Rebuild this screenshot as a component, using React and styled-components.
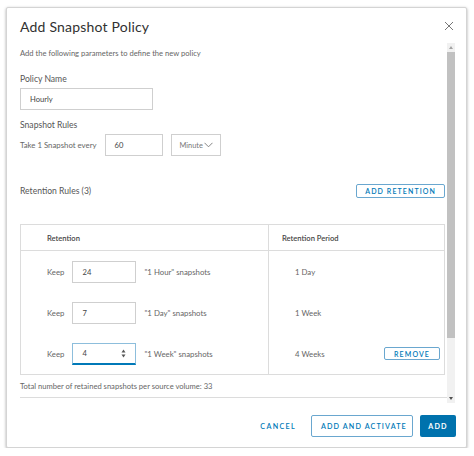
import React from 'react'
import styled, { createGlobalStyle } from 'styled-components'

const GlobalStyle = createGlobalStyle`
  html, body { margin: 0; padding: 0; background: #fff; }
  body { font-family: Lato, "Liberation Sans", sans-serif; color: #565656; }
`

const rules = [
  { keep: '24', unit: '"1 Hour" snapshots', period: '1 Day' },
  { keep: '7', unit: '"1 Day" snapshots', period: '1 Week' },
  { keep: '4', unit: '"1 Week" snapshots', period: '4 Weeks', focused: true, removable: true },
]

const Dialog = styled.div`
  margin: 7px 0 0 6px;
  width: 461px;
  height: 441px;
  box-sizing: border-box;
  border: 1px solid #d4d4d4;
  border-radius: 2px;
  background: #fff;
  box-shadow: 0 1px 3px rgba(0, 0, 0, 0.35);
  display: flex;
  flex-direction: column;
`

const Header = styled.div`
  height: 35px;
  display: flex;
  align-items: center;
  justify-content: space-between;
  padding: 0 12px 0 13px;
`

const Title = styled.h1`
  margin: 2px 0 0;
  font-size: 14px;
  font-weight: 400;
  color: #313131;
  letter-spacing: 0.2px;
`

const Close = styled.button`
  border: 0;
  background: none;
  padding: 0;
  width: 10px;
  height: 10px;
  display: flex;
`

const BodyRow = styled.div`
  display: flex;
  height: 360px;
`

const Content = styled.div`
  flex: 1;
  padding: 3px 0 0 13px;
  display: flex;
  flex-direction: column;
`

const Scrollbar = styled.div`
  width: 8px;
  margin-right: 11px;
  margin-left: 1px;
  display: flex;
  flex-direction: column;
  background: #f1f1f1;
`

const ScrollArrow = styled.div`
  height: 9px;
  display: flex;
  align-items: center;
  justify-content: center;
  background: #f1f1f1;
`

const Thumb = styled.div`
  height: 286px;
  background: #c1c1c1;
`

const Track = styled.div`
  flex: 1;
`

const Hint = styled.p`
  margin: 0;
  font-size: 7.6px;
  line-height: 14px;
  color: #666;
`

const Label = styled.div`
  font-size: 8.6px;
  line-height: 14px;
  color: #565656;
  margin-top: ${p => p.$top || 0}px;
`

const TextInput = styled.div`
  box-sizing: border-box;
  width: ${p => p.$w}px;
  height: 22px;
  border: 1px solid ${p => (p.$focused ? '#8dbedc' : '#cfcfcf')};
  border-bottom: ${p => (p.$focused ? '2px solid #0079b8' : '1px solid #cfcfcf')};
  padding: 0 9px;
  display: flex;
  align-items: center;
  justify-content: space-between;
  font-size: 7.6px;
  color: #454545;
  background: #fff;
  white-space: nowrap;
`

const Field = styled(TextInput)`
  margin-top: ${p => p.$top || 0}px;
`

const RuleRow = styled.div`
  display: flex;
  align-items: center;
  margin-top: 2px;
  gap: 8px;
`

const Small = styled.span`
  font-size: 7.8px;
  color: #666;
  white-space: nowrap;
`

const Select = styled(TextInput)`
  color: #777;
  font-size: 7.4px;
  padding: 0 7px 0 8px;
`

const SectionBar = styled.div`
  display: flex;
  align-items: center;
  justify-content: space-between;
  margin-top: 26px;
  height: 17px;
`

const OutlineButton = styled.button`
  box-sizing: border-box;
  height: ${p => p.$h || 14}px;
  width: ${p => (p.$w ? `${p.$w}px` : 'auto')};
  padding: 0 ${p => p.$px || 9}px;
  border: 1px solid #6aa7cf;
  border-radius: 2px;
  background: #fff;
  color: #0079b8;
  font-family: inherit;
  font-size: ${p => p.$fs || 7}px;
  font-weight: 600;
  letter-spacing: ${p => p.$ls || 1.1}px;
  text-transform: uppercase;
  white-space: nowrap;
  margin-right: ${p => p.$mr || 0}px;
`

const Table = styled.div`
  margin-top: 25px;
  margin-right: 1px;
  border: 1px solid #dcdcdc;
  display: grid;
  grid-template-columns: 248px 1fr;
`

const HeadCell = styled.div`
  height: 25px;
  border-bottom: 1px solid #dcdcdc;
  border-right: ${p => (p.$first ? '1px solid #dcdcdc' : '0')};
  display: flex;
  align-items: center;
  padding-left: ${p => p.$pl}px;
  font-size: 7.6px;
  font-weight: 600;
  color: #454545;
`

const Column = styled.div`
  display: flex;
  flex-direction: column;
  border-right: ${p => (p.$first ? '1px solid #dcdcdc' : '0')};
`

const Cell = styled.div`
  height: 41px;
  display: flex;
  align-items: center;
  padding-left: ${p => p.$pl}px;
  padding-right: 4px;
  justify-content: ${p => (p.$spread ? 'space-between' : 'flex-start')};
  gap: 8px;
`

const Total = styled.div`
  font-size: 7.6px;
  color: #666;
  margin-top: 4px;
  line-height: 14px;
`

const Divider = styled.div`
  height: 1px;
  background: #dcdcdc;
  margin-top: 4px;
  margin-right: -1px;
`

const Footer = styled.div`
  flex: 1;
  display: flex;
  justify-content: flex-end;
  align-items: flex-start;
  padding: 12px 10px 0 0;
  gap: 7px;
`

const FlatButton = styled.button`
  height: 22px;
  border: 0;
  background: none;
  color: #0079b8;
  font-family: inherit;
  font-size: 7.2px;
  font-weight: 600;
  letter-spacing: 1.3px;
  padding: 0;
  margin-right: 8px;
`

const PrimaryButton = styled.button`
  height: 22px;
  width: 36px;
  border: 0;
  border-radius: 2px;
  background: #0072ad;
  color: #fff;
  font-family: inherit;
  font-size: 7.2px;
  font-weight: 700;
  letter-spacing: 1.2px;
  padding: 0;
`

const Chevron = () => (
  <svg width="9" height="6" viewBox="0 0 9 6">
    <path d="M0.5 0.8 L4.5 4.8 L8.5 0.8" fill="none" stroke="#777" strokeWidth="0.9" />
  </svg>
)

const Spinner = () => (
  <svg width="5" height="9" viewBox="0 0 5 9">
    <path d="M2.5 0.5 L4.5 3.5 L0.5 3.5 Z" fill="#555" />
    <path d="M2.5 8.5 L4.5 5.5 L0.5 5.5 Z" fill="#555" />
  </svg>
)

const App = () => {
  return (
    <>
      <GlobalStyle />
      <Dialog>
        <Header>
          <Title>Add Snapshot Policy</Title>
          <Close aria-label="Close">
            <svg width="10" height="10" viewBox="0 0 10 10">
              <path d="M1 1 L9 9 M9 1 L1 9" stroke="#777" strokeWidth="1" />
            </svg>
          </Close>
        </Header>
        <BodyRow>
          <Content>
            <Hint>Add the following parameters to define the new policy</Hint>
            <Label $top={12}>Policy Name</Label>
            <Field $w={133} $top={2}>Hourly</Field>
            <Label $top={8}>Snapshot Rules</Label>
            <RuleRow>
              <Small>Take 1 Snapshot every</Small>
              <TextInput $w={58}>60</TextInput>
              <Select $w={50}>
                Minute <Chevron />
              </Select>
            </RuleRow>
            <SectionBar>
              <Label>Retention Rules (3)</Label>
              <OutlineButton $h={14} $px={8} $mr={1}>Add Retention</OutlineButton>
            </SectionBar>
            <Table>
              <HeadCell $first $pl={26}>Retention</HeadCell>
              <HeadCell $pl={13}>Retention Period</HeadCell>
              <Column $first>
                {rules.map(r => (
                  <Cell key={r.unit} $pl={26}>
                    <Small>Keep</Small>
                    <TextInput $w={64} $focused={r.focused}>
                      {r.keep}
                      {r.focused && <Spinner />}
                    </TextInput>
                    <Small>{r.unit}</Small>
                  </Cell>
                ))}
              </Column>
              <Column>
                {rules.map(r => (
                  <Cell key={r.period} $pl={26} $spread>
                    <Small>{r.period}</Small>
                    {r.removable && <OutlineButton $h={13} $px={9} $fs={7}>Remove</OutlineButton>}
                  </Cell>
                ))}
              </Column>
            </Table>
            <Total>Total number of retained snapshots per source volume: 33</Total>
            <Divider />
          </Content>
          <Scrollbar>
            <ScrollArrow>
              <svg width="4" height="3" viewBox="0 0 4 3"><path d="M2 0 L4 3 L0 3 Z" fill="#a3a3a3" /></svg>
            </ScrollArrow>
            <Thumb />
            <Track />
            <ScrollArrow>
              <svg width="4" height="3" viewBox="0 0 4 3"><path d="M0 0 L4 0 L2 3 Z" fill="#505050" /></svg>
            </ScrollArrow>
          </Scrollbar>
        </BodyRow>
        <Footer>
          <FlatButton>CANCEL</FlatButton>
          <OutlineButton $h={22} $w={102} $px={0} $fs={7.2} $ls={1.1}>Add and Activate</OutlineButton>
          <PrimaryButton>ADD</PrimaryButton>
        </Footer>
      </Dialog>
    </>
  )
}

export default App
